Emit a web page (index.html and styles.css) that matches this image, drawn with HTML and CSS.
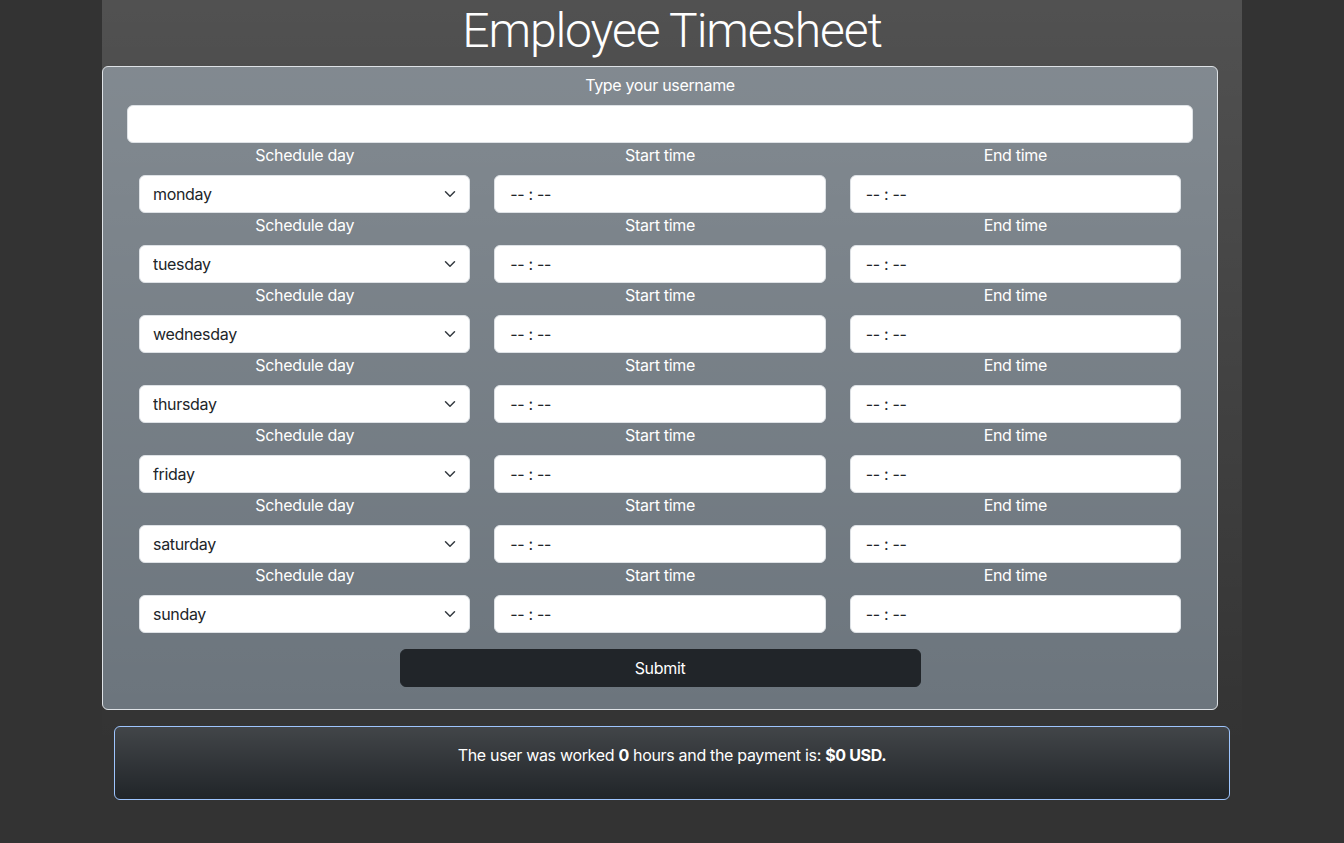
FILE: index.html
```html
<!DOCTYPE html>
<html lang="en">
<head>
  <meta charset="UTF-8" />
  <meta name="viewport" content="width=device-width, initial-scale=1.0" />
  <title>Employee Timesheet</title>
  <link rel="stylesheet" href="styles.css">
</head>
<body>
  <div class="page">
    <h1 class="title">Employee Timesheet</h1>

    <!-- Timesheet form -->
    <form class="sheet" onsubmit="return false">
      <label class="field-label" for="username">Type your username</label>
      <input class="field" type="text" id="username">

      <div class="days">
        <div class="cell">
          <label class="field-label">Schedule day</label>
          <div class="select-wrap">
            <select class="field select"><option>monday</option></select>
            <svg class="chevron" viewBox="0 0 16 16"><path d="m2 5 6 6 6-6"/></svg>
          </div>
        </div>
        <div class="cell">
          <label class="field-label">Start time</label>
          <input class="field time" type="text" placeholder="-- : --">
        </div>
        <div class="cell">
          <label class="field-label">End time</label>
          <input class="field time" type="text" placeholder="-- : --">
        </div>

        <div class="cell">
          <label class="field-label">Schedule day</label>
          <div class="select-wrap">
            <select class="field select"><option>tuesday</option></select>
            <svg class="chevron" viewBox="0 0 16 16"><path d="m2 5 6 6 6-6"/></svg>
          </div>
        </div>
        <div class="cell">
          <label class="field-label">Start time</label>
          <input class="field time" type="text" placeholder="-- : --">
        </div>
        <div class="cell">
          <label class="field-label">End time</label>
          <input class="field time" type="text" placeholder="-- : --">
        </div>

        <div class="cell">
          <label class="field-label">Schedule day</label>
          <div class="select-wrap">
            <select class="field select"><option>wednesday</option></select>
            <svg class="chevron" viewBox="0 0 16 16"><path d="m2 5 6 6 6-6"/></svg>
          </div>
        </div>
        <div class="cell">
          <label class="field-label">Start time</label>
          <input class="field time" type="text" placeholder="-- : --">
        </div>
        <div class="cell">
          <label class="field-label">End time</label>
          <input class="field time" type="text" placeholder="-- : --">
        </div>

        <div class="cell">
          <label class="field-label">Schedule day</label>
          <div class="select-wrap">
            <select class="field select"><option>thursday</option></select>
            <svg class="chevron" viewBox="0 0 16 16"><path d="m2 5 6 6 6-6"/></svg>
          </div>
        </div>
        <div class="cell">
          <label class="field-label">Start time</label>
          <input class="field time" type="text" placeholder="-- : --">
        </div>
        <div class="cell">
          <label class="field-label">End time</label>
          <input class="field time" type="text" placeholder="-- : --">
        </div>

        <div class="cell">
          <label class="field-label">Schedule day</label>
          <div class="select-wrap">
            <select class="field select"><option>friday</option></select>
            <svg class="chevron" viewBox="0 0 16 16"><path d="m2 5 6 6 6-6"/></svg>
          </div>
        </div>
        <div class="cell">
          <label class="field-label">Start time</label>
          <input class="field time" type="text" placeholder="-- : --">
        </div>
        <div class="cell">
          <label class="field-label">End time</label>
          <input class="field time" type="text" placeholder="-- : --">
        </div>

        <div class="cell">
          <label class="field-label">Schedule day</label>
          <div class="select-wrap">
            <select class="field select"><option>saturday</option></select>
            <svg class="chevron" viewBox="0 0 16 16"><path d="m2 5 6 6 6-6"/></svg>
          </div>
        </div>
        <div class="cell">
          <label class="field-label">Start time</label>
          <input class="field time" type="text" placeholder="-- : --">
        </div>
        <div class="cell">
          <label class="field-label">End time</label>
          <input class="field time" type="text" placeholder="-- : --">
        </div>

        <div class="cell">
          <label class="field-label">Schedule day</label>
          <div class="select-wrap">
            <select class="field select"><option>sunday</option></select>
            <svg class="chevron" viewBox="0 0 16 16"><path d="m2 5 6 6 6-6"/></svg>
          </div>
        </div>
        <div class="cell">
          <label class="field-label">Start time</label>
          <input class="field time" type="text" placeholder="-- : --">
        </div>
        <div class="cell">
          <label class="field-label">End time</label>
          <input class="field time" type="text" placeholder="-- : --">
        </div>
      </div>

      <button class="btn-submit" type="submit">Submit</button>
    </form>

    <!-- Result -->
    <div class="result">
      <p>The user was worked <b>0</b> hours and the payment is: <b>$0 USD.</b></p>
    </div>
  </div>
</body>
</html>
```

FILE: styles.css
```css
* {
  box-sizing: border-box;
}
body {
  margin: 0;
  background-color: #333;
  font-family: 'Inter', 'Liberation Sans', sans-serif;
  font-size: 16px;
  line-height: 1.5;
  letter-spacing: -0.02em;
  color: #212529;
}
.page {
  width: 1140px;
  margin: 0 auto;
  padding: 0 12px;
  background-image: linear-gradient(180deg, rgba(255,255,255,0.15), rgba(255,255,255,0));
  background-repeat: no-repeat;
  background-size: 100% 747px;
}
.title {
  margin: 0 0 6px;
  padding-top: 2px;
  text-align: center;
  color: #fff;
  font-family: 'Roboto', 'Inter', sans-serif;
  font-size: 48px;
  font-weight: 300;
  line-height: 1.2;
  letter-spacing: -1.1px;
}
/* Form card */
.sheet {
  margin: 0 12px 0 -12px;
  padding: 6px 24px 22px;
  border: 1px solid #dee2e6;
  border-radius: 6px;
  background-color: #6c757d;
  background-image: linear-gradient(180deg, rgba(255,255,255,0.15), rgba(255,255,255,0));
  color: #fff;
}
.field-label {
  display: block;
  margin-bottom: 8px;
  text-align: center;
}
.field {
  display: block;
  width: 100%;
  height: 38px;
  padding: 6px 12px;
  font-family: inherit;
  font-size: 16px;
  line-height: 1.5;
  letter-spacing: inherit;
  color: #212529;
  background-color: #fff;
  border: 1px solid #dee2e6;
  border-radius: 6px;
  outline: none;
}
.time {
  padding-left: 15px;
}
.time::placeholder {
  color: #212529;
  opacity: 1;
}
.days {
  display: grid;
  grid-template-columns: repeat(3, 1fr);
  column-gap: 24px;
  padding: 0 12px;
}
.select-wrap {
  position: relative;
}
.select {
  appearance: none;
  -webkit-appearance: none;
  padding-left: 13px;
  padding-right: 36px;
}
.chevron {
  position: absolute;
  right: 12px;
  top: 13px;
  width: 16px;
  height: 12px;
  fill: none;
  stroke: #343a40;
  stroke-width: 2;
  stroke-linecap: round;
  stroke-linejoin: round;
  pointer-events: none;
}
.btn-submit {
  display: block;
  width: 521px;
  height: 38px;
  margin: 16px auto 0;
  font-family: inherit;
  font-size: 16px;
  letter-spacing: inherit;
  color: #fff;
  background-color: #212529;
  border: 1px solid #212529;
  border-radius: 6px;
  cursor: pointer;
}
/* Result box */
.result {
  margin-top: 16px;
  padding: 16px;
  border: 1px solid #9ec5fe;
  border-radius: 6px;
  background-color: #212529;
  background-image: linear-gradient(180deg, rgba(255,255,255,0.15), rgba(255,255,255,0));
  color: #fff;
  text-align: center;
}
.result p {
  margin: 0 0 16px;
}
```
